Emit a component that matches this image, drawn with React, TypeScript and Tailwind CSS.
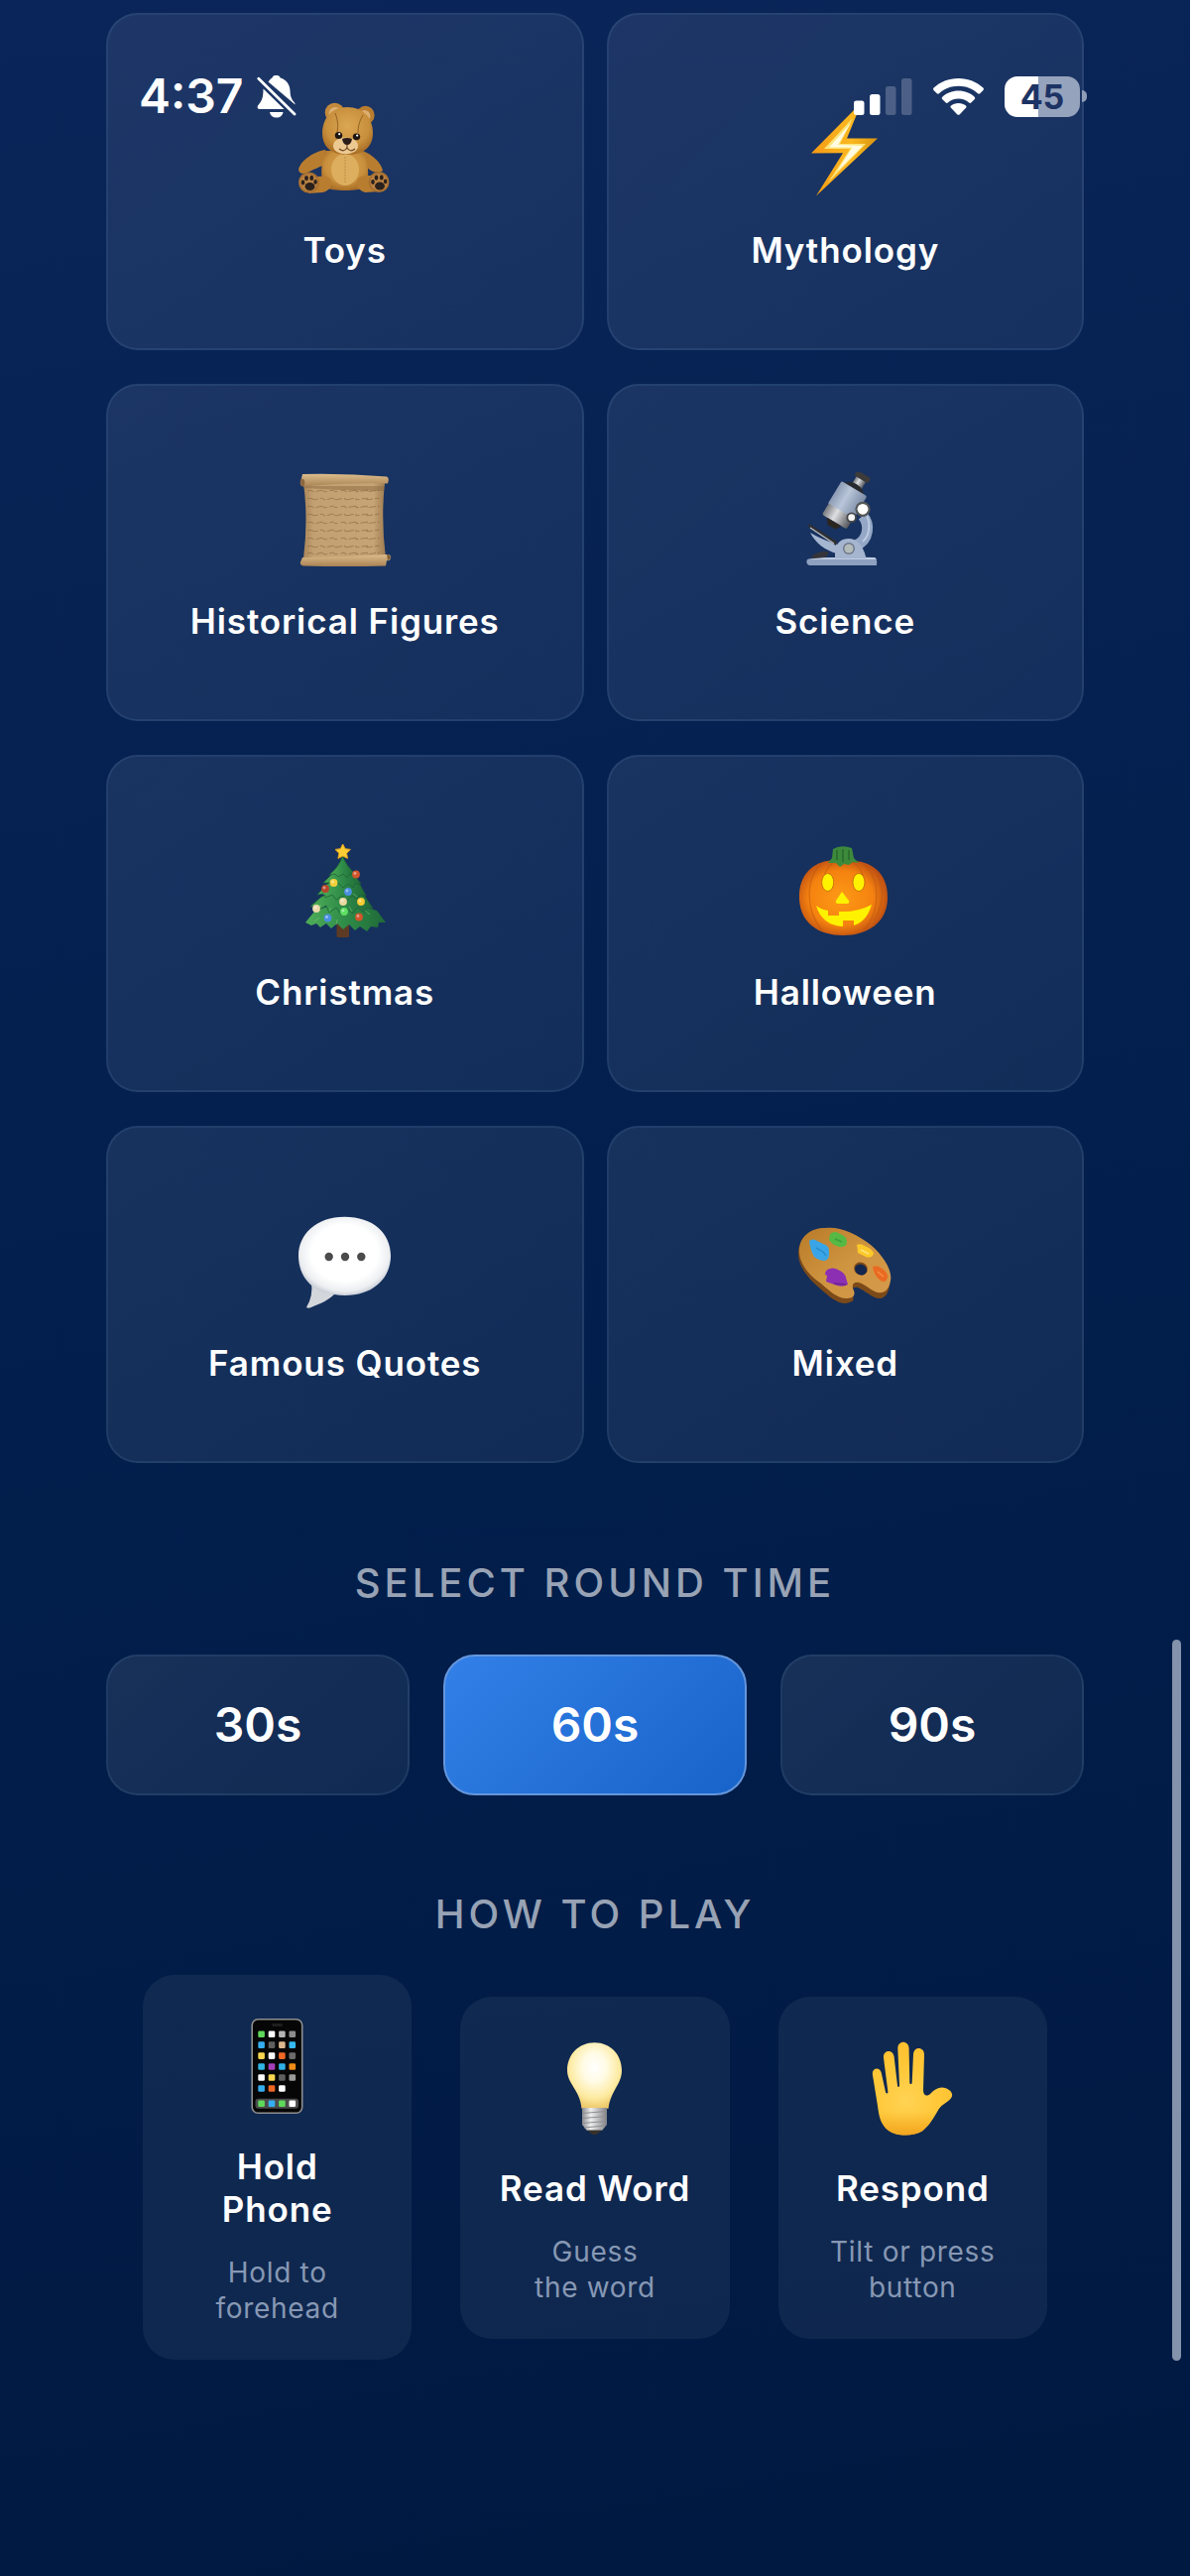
import React, { useState } from 'react';

interface IconProps {
  children: React.ReactNode;
}

const Emoji: React.FC<IconProps> = ({ children }) => (
  <svg viewBox="0 0 96 96" className="w-24 h-24 shrink-0" aria-hidden="true">
    {children}
  </svg>
);

const Paw = ({ x, y }: { x: number; y: number }) => (
  <g transform={`translate(${x} ${y})`}>
    <circle r="10.5" fill="#a8702f" />
    <circle r="8.6" fill="#b98243" />
    <ellipse cx="1" cy="4" rx="5" ry="4" fill="#2a201c" />
    <ellipse cx="-6" cy="0" rx="1.8" ry="2.4" fill="#2a201c" />
    <ellipse cx="-2.5" cy="-4.4" rx="1.9" ry="2.6" fill="#2a201c" />
    <ellipse cx="2.8" cy="-4.6" rx="1.9" ry="2.6" fill="#2a201c" />
    <ellipse cx="6.6" cy="-.6" rx="1.7" ry="2.3" fill="#2a201c" />
  </g>
);

const TeddyIcon = () => (
  <Emoji>
    <defs>
      <radialGradient id="bear" cx=".5" cy=".4" r=".6">
        <stop offset="0" stopColor="#dba752" />
        <stop offset=".7" stopColor="#c88f3c" />
        <stop offset="1" stopColor="#a96f27" />
      </radialGradient>
    </defs>
    <path d="M28 49C16 51 3 60 1 69c1 6 8 4 13 1 7-3 14-6 18-10z" fill="#b97d30" />
    <path d="M66 50c9 4 18 11 20 20-5 4-12 1-17-4z" fill="#b97d30" />
    <path d="M28 50c-4 12-6 27 0 37 6 4 34 4 40 0 5-10 4-25-2-37z" fill="url(#bear)" />
    <ellipse cx="48" cy="69" rx="14" ry="16" fill="#dcae5e" />
    <path d="M48 56v26" stroke="#bb8840" strokeWidth=".8" strokeDasharray="2 1" />
    <path d="M14 76c9 0 18-2 20 4s-3 11-9 12l-14 1z" fill="#b97d30" />
    <path d="M80 75c-9 0-18-1-20 5s3 11 9 12l13-1z" fill="#b97d30" />
    <circle cx="37.5" cy="11.5" r="9.8" fill="#c38a3b" />
    <circle cx="38" cy="12.5" r="6.5" fill="#dcb074" />
    <circle cx="68.5" cy="14" r="9.2" fill="#b97d30" />
    <circle cx="67.5" cy="15" r="6" fill="#dcae70" />
    <path d="M50 6c17 0 26 12 26 26s-9 22-26 22-25-9-25-22S33 6 50 6z" fill="url(#bear)" />
    <path d="M38 12c3 8 3 13 2 19M66 14c-4 7-5 12-5 18" stroke="#8b5a22" strokeWidth=".9" fill="none" />
    <ellipse cx="48.5" cy="45" rx="12.5" ry="8.5" fill="#ecc991" />
    <ellipse cx="41.5" cy="34.5" rx="3.7" ry="3.5" fill="#1d1512" />
    <ellipse cx="59.5" cy="35.8" rx="3.7" ry="3.4" fill="#1d1512" />
    <circle cx="42.2" cy="33.2" r="1.1" fill="#fff" />
    <circle cx="60.2" cy="34.6" r="1.1" fill="#fff" />
    <path d="M45 38q5-2 10 0-1 6-5 6t-5-6z" fill="#2b1c18" />
    <path d="M50 44v3m-8 1q5 4 8-1 3 5 8 1" stroke="#6b431e" strokeWidth="1.2" fill="none" />
    <Paw x={11.5} y={82} />
    <Paw x={82} y={81.5} />
  </Emoji>
);

const BoltIcon = () => (
  <Emoji>
    <defs>
      <linearGradient id="bolt" x1="0" x2="1">
        <stop offset="0" stopColor="#f59a14" />
        <stop offset=".6" stopColor="#fbb821" />
        <stop offset="1" stopColor="#d9940f" />
      </linearGradient>
    </defs>
    <path d="M65 1 14 52.5l32-.2L19 95.5l62-58H50z" fill="url(#bolt)" />
    <path d="M56 17 27 48h26.500L31 82l38-39H43z" fill="#fde57a" />
    <path d="M54 22 32 46.500h23.500L40 71l26-26-25-1z" fill="#fffbe2" />
  </Emoji>
);

const ScrollIcon = () => (
  <Emoji>
    <defs>
      <linearGradient id="paper" x1="0" x2="1">
        <stop offset="0" stopColor="#a98558" />
        <stop offset=".12" stopColor="#c3a071" />
        <stop offset=".85" stopColor="#c6a475" />
        <stop offset="1" stopColor="#9e7b50" />
      </linearGradient>
      <linearGradient id="roll" x1="0" x2="0" y1="0" y2="1">
        <stop offset="0" stopColor="#ddbd8b" />
        <stop offset="1" stopColor="#a98354" />
      </linearGradient>
    </defs>
    <path d="M6 11h82q-4 36 1 76H6q5-40 0-76z" fill="url(#paper)" />
    <path d="M7 14h80v5q-40 0-79-3z" fill="#8c6a42" opacity=".5" />
    <g stroke="#86663f" strokeWidth="1" fill="none" opacity=".6">
      {[19, 27, 35, 43, 51, 59, 67, 75, 82].map((y, i) => (
        <path
          key={y}
          d={`M10 ${y}q3-1.500 5 0t6 0 5 0 6 0 5 0 6 0 5 0 6 0 5 0 6 0 5 0 6 0 5 0`}
          strokeDasharray={i % 2 ? '11 2 6 2 15 2' : '7 2 12 2 9 3'}
        />
      ))}
    </g>
    <path d="M5 2q42-1 85 2.500 3 1.500 1 7-44-1-84 3-5 0-4-5 1-3 2-7.500z" fill="url(#roll)" />
    <ellipse cx="5" cy="10.500" rx="2.300" ry="3.800" fill="#8b6840" />
    <path d="M5 86q42 0 85-3 5 0 4 4-1 3-4 2l-1 5.500q-42 1-83 0-4-1-3-4z" fill="url(#roll)" />
    <path d="M90 83q4 0 4 4l-3 2z" fill="#7f5e38" />
  </Emoji>
);

const MicroscopeIcon = () => (
  <Emoji>
    <defs>
      <linearGradient id="metal" x1="0" x2="1">
        <stop offset="0" stopColor="#8b9ab3" />
        <stop offset=".4" stopColor="#b9c6d9" />
        <stop offset="1" stopColor="#7c8ba6" />
      </linearGradient>
      <linearGradient id="silver" x1="0" x2="1">
        <stop offset="0" stopColor="#77787c" />
        <stop offset=".4" stopColor="#dedfe2" />
        <stop offset="1" stopColor="#55565b" />
      </linearGradient>
    </defs>
    <path d="M66 44c7 8 7 24-7 30" stroke="#95a7c6" strokeWidth="11" fill="none" />
    <path d="M70 44c4 8 3 20-4 26" stroke="#bccbe2" strokeWidth="2" fill="none" />
    <path d="M13 61c5 10 15 18 27 21l1-9C31 70 21 66 13 61z" fill="#a5b6d1" />
    <path d="m12 52 28 18-1 4-28-19z" fill="#2e2f33" />
    <path d="m13 56 24 16" stroke="#b5b9bf" strokeWidth="1.500" />
    <ellipse cx="23" cy="84" rx="9" ry="3.500" transform="rotate(-18 23 84)" fill="#34353a" />
    <path d="M10 88q17-3 68-2 3 2 2 8H12q-4-2-2-6z" fill="#8ea0c0" />
    <path d="M10 88q17-3 68-2l2 2H10z" fill="#c0cde2" />
    <path d="M38 87V80q2-13 14-13t17 18v2z" fill="#a5b5d0" />
    <circle cx="52" cy="77" r="6" fill="#6c7688" />
    <circle cx="52" cy="77" r="4.600" fill="#b3bcb9" />
    <g transform="rotate(31 50 32)">
      <rect x="44" y="1" width="11" height="12" fill="url(#silver)" />
      <rect x="41.500" y="-2.500" width="16" height="6" rx="2" fill="#3d3b3a" />
      <path d="M35 18q4-8 13-8t14 8z" fill="#292a2f" />
      <rect x="33.500" y="15" width="30" height="27" rx="2" fill="url(#metal)" />
      <rect x="34" y="41" width="29" height="13" rx="2" fill="url(#silver)" />
      <path d="M40 54h17l-4 6h-9z" fill="#2b2520" />
    </g>
    <circle cx="66" cy="37.300" r="7.600" fill="#555759" />
    <circle cx="66" cy="37.300" r="5.400" fill="#fff" />
    <circle cx="54.700" cy="45.700" r="5.300" fill="#444649" />
    <circle cx="54.700" cy="45.700" r="3.400" fill="#f4f4f4" />
  </Emoji>
);

const baubles = [
  [59, 31.5, '#d2552b'],
  [36.5, 40, '#f4cf3a'],
  [28, 46, '#b6452a'],
  [51, 49, '#4b8fe0'],
  [46, 59, '#e9d8a0'],
  [64, 59, '#f5cb35'],
  [19, 66, '#eadba8'],
  [47, 69, '#5ede62'],
  [30.5, 75.5, '#4b8fe0'],
  [62, 74.5, '#d2552b'],
] as const;

const TreeIcon = () => (
  <Emoji>
    <defs>
      <linearGradient id="needles" x1="0" x2="1">
        <stop offset="0" stopColor="#4fae59" />
        <stop offset=".5" stopColor="#2f8c48" />
        <stop offset="1" stopColor="#1f6938" />
      </linearGradient>
    </defs>
    <rect x="39.500" y="80" width="12.500" height="15" rx="1.500" fill="#5d3a24" />
    <path
      d="M45 58 17 69 8 80l6 3 5-2 4 4 6-4 5 5 6-5 6 6 6-5 6 6 5-4 7 5 4-5 7 1 1-5 7 0-9-12z"
      fill="url(#needles)"
    />
    <path d="M45 42 23 55l-10 9 7-1 2 4 7-4 3 7 7-5 5 7 6-6 6 5 4-6 8 5 2-5 6 1-8-12z" fill="url(#needles)" stroke="#1e6336" strokeWidth=".8" />
    <path d="M45 31 29 42l-9 10 7-1 1 4 7-3 4 5 6-4 5 5 5-5 6 4 2-5 6 1-6-11z" fill="url(#needles)" stroke="#1e6336" strokeWidth=".8" />
    <path d="M45 22 35 31l-9 9 7 0 2 3 6-3 5 5 5-4 5 4 2-4 6 0-7-9z" fill="url(#needles)" stroke="#1e6336" strokeWidth=".8" />
    <path d="M45.500 13Q42 24 32 32l6-1 3 3 5-3 4 4 3-4 6 1Q49 23 45.500 13z" fill="url(#needles)" stroke="#1e6336" strokeWidth=".8" />
    <g stroke="#6fc873" strokeWidth="1" opacity=".6">
      <path d="m24 62-5 4M34 65l-2 4M52 64l3 5M30 49l-4 3M56 51l4 3M22 75l-5 4M40 77l-1 5M68 68l5 4" />
    </g>
    {baubles.map(([x, y, fill]) => (
      <g key={`${x}-${y}`}>
        <circle cx={x} cy={y} r="3.900" fill={fill} />
        <circle cx={x - 1} cy={y - 1} r="1.400" fill="#fff" opacity=".45" />
      </g>
    ))}
    <path
      d="m45.700 1 2.400 4.700 5.300.7-3.900 3.800 1 5.200-4.800-2.400-4.800 2.400 1-5.200L38 6.400l5.300-.7z"
      fill="#ffce35"
      stroke="#e5a51d"
      strokeWidth="1"
      strokeLinejoin="round"
    />
  </Emoji>
);

const PumpkinIcon = () => (
  <Emoji>
    <defs>
      <radialGradient id="pumpkin" cx=".47" cy=".5" r=".56">
        <stop offset="0" stopColor="#fd9a16" />
        <stop offset=".65" stopColor="#f5820f" />
        <stop offset="1" stopColor="#b84a14" />
      </radialGradient>
    </defs>
    <path d="M46 20C58 14 92 20 91 55c0 25-20 38-45 38S1 80 2 52C3 20 34 13 46 20z" fill="url(#pumpkin)" />
    <path d="M24 21C8 36 8 68 25 88M37 19c-8 6-11 15-12 22M67 21c17 15 17 48 0 67M56 19c8 5 11 14 12 22M81 32c7 16 5 32-4 46" stroke="#b9530f" strokeWidth="1.200" fill="none" opacity=".5" />
    <path d="M36 6q8-5 19-1l2 10 5 5-6-1-4 3-5-1-4 3-4-4-8 0 4-5z" fill="#3d8a3c" />
    <path d="M40 7v10M46 6v13M52 7v10" stroke="#256428" strokeWidth="1.300" />
    <ellipse cx="30.700" cy="39.500" rx="6" ry="9" fill="#fff200" stroke="#c0630e" strokeWidth=".8" />
    <ellipse cx="62" cy="39.500" rx="6" ry="9" fill="#fff200" stroke="#c0630e" strokeWidth=".8" />
    <path d="m45 49-6 9q-1 3 2 3h9q3 0 2-3z" fill="#fff200" />
    <path
      d="M19 63q5 4 12 5v5h11v-4q18 1 33-7-5 17-18 21v-5H46v6q-21-1-27-21z"
      fill="#fff200"
    />
  </Emoji>
);

const BubbleIcon = () => (
  <Emoji>
    <defs>
      <radialGradient id="bubble" cx=".5" cy=".46" r=".55">
        <stop offset=".65" stopColor="#fff" />
        <stop offset=".88" stopColor="#eceef1" />
        <stop offset="1" stopColor="#c6cbd4" />
      </radialGradient>
    </defs>
    <path d="M14 68q2 15-5 26 2 2 7-1 14-5 21-12z" fill="#d3d6db" />
    <path d="M47.500 2.700C76 2.700 94 19 94 42S76 82 48 82q-6 0-11-1C16 79 1 64 1 42S19 2.700 47.500 2.700z" fill="url(#bubble)" />
    <circle cx="31.700" cy="43" r="4.200" fill="#4b4b4d" />
    <circle cx="48" cy="43" r="4.200" fill="#4b4b4d" />
    <circle cx="64.300" cy="43" r="4.200" fill="#4b4b4d" />
  </Emoji>
);

const PaletteIcon = () => (
  <Emoji>
    <defs>
      <linearGradient id="wood" x1="0" x2="1" y1="0" y2="1">
        <stop offset="0" stopColor="#b87a28" />
        <stop offset=".5" stopColor="#cf9440" />
        <stop offset="1" stopColor="#d59b4d" />
      </linearGradient>
    </defs>
    <path
      transform="translate(-1 3)"
      d="M28 14c14-2 31 5 46 17 14 12 22 27 20 38-2 12-8 15-15 12-6-3-12-8-17-10-5-1-7 2-6 6 2 5 4 8-6 10-10 0-18-8-26-15C12 62 2 50 2 37 2 22 14 14 28 14z"
      fill="#7c4a19"
    />
    <path
      d="M28 14c14-2 31 5 46 17 14 12 22 27 20 36-2 12-9 14-16 11-6-3-11-8-16-9-5-1-7 2-6 6 3 5 2 10-6 10-10 0-18-8-26-15C12 62 2 50 2 37 2 22 14 14 28 14z"
      fill="url(#wood)"
    />
    <ellipse cx="64" cy="55" rx="7" ry="6.300" transform="rotate(25 64 55)" fill="#7c4a19" />
    <ellipse cx="64.500" cy="55.800" rx="6.200" ry="5.300" transform="rotate(25 64 55)" fill="#13264e" />
    <path d="M12 27q4-3 8 0l6 3q6 1 6 8 1 7-4 9-6 0-11-4-4-7-5-16z" fill="#3aa5e6" />
    <path d="m19 34 7 4 3 4" stroke="#2a8dcc" strokeWidth="1.500" fill="none" />
    <path d="M33 20q5-4 10 0 7 2 7 8 0 6-8 5-7-2-10-7z" fill="#55b944" />
    <path d="m38 25 7 3" stroke="#3f9f3a" strokeWidth="1.500" />
    <path d="M60 31q4-2 8 1 8 3 9 8-2 5-8 3l-8-4q0-4-1-8z" fill="#fcc92a" />
    <path d="m64 36 8 4" stroke="#ffe27a" strokeWidth="1.500" />
    <path d="M76 53q4-2 8 1 8 5 7 10-2 6-7 3-7-5-8-14z" fill="#ea6a22" />
    <path d="m81 58 6 5" stroke="#f98f45" strokeWidth="1.500" />
    <path d="M30 56q6-3 11 0 7 3 8 8l2 7q-5 3-11 1l-11-4 1-6q-4-1 0-6z" fill="#8d2fb3" />
    <path d="m37 70 12 1" stroke="#6a2290" strokeWidth="1.500" />
  </Emoji>
);

const apps = [
  ['#5fd95a', '#fff', '#b5b5b5', '#8c8c8c'],
  ['#35aef0', '#5f5f5f', '#dcb78e', '#35b9f0'],
  ['#fcd650', '#fff', '#ef6724', '#6b6b6b'],
  ['#2fb6e4', '#a53fbb', '#2fb0e4', '#f08b17'],
  ['#fff', '#fcd650', '#5f5f5f', '#9a9a9a'],
  ['#35aef0', '#ef6724', '#fff'],
];

const PhoneIcon = () => (
  <Emoji>
    <rect x="22.200" y=".8" width="50.500" height="94.400" rx="6" fill="#060606" stroke="#8f8f8f" strokeWidth="1.600" />
    <rect x="42" y="5" width="11" height="3" rx="1.500" fill="#1e1e1e" />
    {apps.map((row, r) =>
      row.map((fill, c) => (
        <rect key={`${r}-${c}`} x={28.3 + c * 10.4} y={12.4 + r * 10.95} width="6.600" height="6.600" rx="1.300" fill={fill} />
      )),
    )}
    <rect x="25.500" y="80.700" width="43.500" height="10" rx="3" fill="#4b4b4b" />
    {['#5fd95a', '#35aef0', '#5fd95a', '#fff'].map((fill, c) => (
      <rect key={c} x={28.3 + c * 10.4} y="82.400" width="6.600" height="6.600" rx="1.300" fill={fill} />
    ))}
  </Emoji>
);

const BulbIcon = () => (
  <Emoji>
    <defs>
      <radialGradient id="glow" cx=".5" cy=".38" r=".62">
        <stop offset="0" stopColor="#fff" />
        <stop offset=".35" stopColor="#fffbe5" />
        <stop offset=".75" stopColor="#fdeaa0" />
        <stop offset="1" stopColor="#edc96a" />
      </radialGradient>
      <linearGradient id="screw" x1="0" x2="1">
        <stop offset="0" stopColor="#8b8c90" />
        <stop offset=".35" stopColor="#efefef" />
        <stop offset="1" stopColor="#808186" />
      </linearGradient>
    </defs>
    <path d="M47.500 2.200c16 0 27.500 12 27.500 28 0 14-11 20-13.500 38.500h-27C33 50 20 44 20 30.200c0-16 11.500-28 27.500-28z" fill="url(#glow)" />
    <path d="M35 68h25v17l-5 6H40l-5-6z" fill="url(#screw)" />
    <path d="M35 73.500l25-2M35 78.500l25-2M35 83.500l25-2M37 88l21-2" stroke="#8e8f93" strokeWidth="1.200" />
    <path d="M40 90.500h15l-5 4q-2.500 1.500-5 0z" fill="#38322c" />
  </Emoji>
);

const HandIcon = () => (
  <Emoji>
    <defs>
      <radialGradient id="hand" gradientUnits="userSpaceOnUse" cx="42" cy="60" r="62">
        <stop offset="0" stopColor="#ffd353" />
        <stop offset=".5" stopColor="#ffc83a" />
        <stop offset="1" stopColor="#ffbf2c" />
      </radialGradient>
      <linearGradient id="wrist" x1="0" x2="0" y1="0" y2="1">
        <stop offset=".75" stopColor="#ef9d1a" stopOpacity="0" />
        <stop offset="1" stopColor="#ef9d1a" stopOpacity=".8" />
      </linearGradient>
      <path
        id="palm"
        d="M7.800 34c-.4-6.500 7.400-7.500 8.900-1.500L21 52c.4 2 2.600 2 2.400-.3L19 17.500c-.8-8 9.500-9 10.600-1L33 45.500c.3 2 2 2 2-.2L33.300 8c0-8.500 11-8.500 11.300 0l.7 34.500c0 2 2.200 2 2.400 0L49 14c.6-8.500 11.200-7.800 11 .4L59 50c0 6 4 7 7.500 3.500C71 48.500 76 46 82 48.200c6 2.300 7.500 7 5 10C84 62.500 78 64 74.500 69.500 69 79 65 86 58 91.500c-9 5.500-26 5.500-34-.5-8-6-9.500-14-11-25z"
      />
    </defs>
    <use href="#palm" fill="url(#hand)" />
    <use href="#palm" fill="url(#wrist)" />
  </Emoji>
);

const categories = [
  { name: 'Toys', icon: <TeddyIcon /> },
  { name: 'Mythology', icon: <BoltIcon /> },
  { name: 'Historical Figures', icon: <ScrollIcon /> },
  { name: 'Science', icon: <MicroscopeIcon /> },
  { name: 'Christmas', icon: <TreeIcon /> },
  { name: 'Halloween', icon: <PumpkinIcon /> },
  { name: 'Famous Quotes', icon: <BubbleIcon /> },
  { name: 'Mixed', icon: <PaletteIcon /> },
];

const roundTimes = [30, 60, 90];

const steps = [
  { title: ['Hold', 'Phone'], text: ['Hold to', 'forehead'], icon: <PhoneIcon /> },
  { title: ['Read Word'], text: ['Guess', 'the word'], icon: <BulbIcon /> },
  { title: ['Respond'], text: ['Tilt or press', 'button'], icon: <HandIcon /> },
];

const StatusBar = () => (
  <div className="absolute inset-x-0 top-0 pt-[75px] pl-[140px] pr-[104px] flex items-center justify-between text-white pointer-events-none">
    <div className="flex items-center gap-[14px]">
      <span className="text-[48px] leading-[44px] font-semibold">4:37</span>
      {/* Silent mode bell */}
      <svg viewBox="0 0 40 44" className="w-10 h-11" fill="currentColor" aria-hidden="true">
        <path d="M11.500 7.500C13 5 14.500 4.300 15.500 3.500 16 1.500 17.500 1 19.500 1s3.500.6 4.200 2.500C30 5.500 33 10 33.500 16c.3 6 1 8.500 4.500 12.500.5.500.6 1.300.6 2z" />
        <path d="M6.500 14.500 27.500 35H3c-2.200 0-3-1.500-2-3.500 4-4.500 5.500-8 5.500-17z" />
        <path d="M13 38h13.500c-.5 3.500-3 5.500-6.700 5.500S13.500 41.500 13 38z" />
        <path d="M1.800 4.200 38 40" stroke="currentColor" strokeWidth="2.800" strokeLinecap="round" />
      </svg>
    </div>
    <div className="flex items-center gap-[21px]">
      <svg viewBox="0 0 59 37" className="w-[59px] h-[37px]" fill="currentColor" aria-hidden="true">
        <rect x="0" y="22.500" width="10.500" height="14.500" rx="2.500" />
        <rect x="16" y="16" width="10.500" height="21" rx="2.500" />
        <rect x="32" y="8" width="10.500" height="29" rx="2.500" opacity=".22" />
        <rect x="48" y="0" width="10.500" height="37" rx="2.500" opacity=".22" />
      </svg>
      <svg viewBox="0 0 51 37" className="w-[51px] h-[37px]" fill="currentColor" aria-hidden="true">
        <path d="M25.500 0C35.500 0 44 3.600 50.400 9.600c.7.700.7 1.600.1 2.300l-3.300 3.400c-.6.6-1.500.6-2.200 0C39.800 10.500 33.200 7.800 25.500 7.800S11.200 10.500 6 15.300c-.7.6-1.600.6-2.200 0L.5 11.900c-.6-.7-.6-1.600.1-2.300C7 3.600 15.500 0 25.500 0z" />
        <path d="M25.500 12.600c6.500 0 12 2.300 16.200 6.100.7.700.7 1.600.1 2.300l-3.500 3.500c-.6.600-1.500.6-2.200 0-2.800-2.500-6.400-4-10.600-4s-7.800 1.500-10.600 4c-.7.6-1.600.6-2.200 0L9.200 21c-.6-.7-.6-1.600.1-2.300 4.200-3.800 9.700-6.100 16.200-6.100z" />
        <path d="M25.500 25c3 0 5.500 1 7.500 2.600.7.600.7 1.500 0 2.200l-6.400 6.600c-.6.600-1.600.6-2.200 0L18 29.800c-.7-.7-.7-1.600 0-2.200C20 26 22.500 25 25.500 25z" />
      </svg>
      <div className="flex items-center gap-[2px]">
        <div className="w-[76px] h-[41px] rounded-[13px] bg-linear-to-r from-white from-45% to-[#96a3bc] to-45% flex items-center justify-center">
          <span className="text-[34px] leading-[41px] font-bold text-[#1c3364]">45</span>
        </div>
        <div className="w-[5px] h-3 rounded-r-full bg-[#8e9cb6]" />
      </div>
    </div>
  </div>
);

export default function App() {
  const [category, setCategory] = useState<string | null>(null);
  const [roundTime, setRoundTime] = useState(60);

  return (
    <div className="relative min-h-screen bg-linear-170 from-[#0a2559] via-[#021e4b] via-55% to-[#001941] font-['Inter','Liberation_Sans',sans-serif] text-white">
      <main className="px-[107px] pt-[13px] pb-[218px]">
        <section className="grid grid-cols-2 gap-x-[23px] gap-y-[34px]">
          {categories.map(({ name, icon }) => (
            <button
              key={name}
              onClick={() => setCategory(name)}
              aria-pressed={category === name}
              className="flex flex-col items-center gap-8 pt-[87px] pb-[77px] rounded-[32px] border-2 border-[#7fb0d8]/12 bg-linear-135 from-[#e6f0ff]/9 to-[#e6f0ff]/7"
            >
              {icon}
              <span className="text-[35px] leading-[44px] font-semibold tracking-wide">{name}</span>
            </button>
          ))}
        </section>

        <h2 className="mt-[93px] mb-11 text-center text-[40px] leading-[56px] font-medium tracking-widest text-white/60">
          SELECT ROUND TIME
        </h2>
        <section className="grid grid-cols-3 gap-[34px]">
          {roundTimes.map((seconds) => (
            <button
              key={seconds}
              onClick={() => setRoundTime(seconds)}
              aria-pressed={roundTime === seconds}
              className={`py-[41px] rounded-[32px] border-2 text-[48px] leading-[56px] font-semibold bg-linear-135 ${
                roundTime === seconds
                  ? 'border-[#6596dc] from-[#3280e8] to-[#1763c9]'
                  : 'border-[#7fb0d8]/12 from-white/9 to-white/6'
              }`}
            >
              {seconds}s
            </button>
          ))}
        </section>

        <h2 className="mt-[92px] mb-[33px] text-center text-[40px] leading-[56px] font-medium tracking-widest text-white/60">
          HOW TO PLAY
        </h2>
        <section className="grid grid-cols-3 items-center gap-[49px] px-[37px]">
          {steps.map(({ title, text, icon }) => (
            <div
              key={title[0]}
              className="flex flex-col items-center pt-11 pb-[34px] rounded-[32px] bg-white/6 text-center whitespace-nowrap"
            >
              {icon}
              <h3 className="mt-8 text-[35px] leading-[43px] font-semibold tracking-wide">
                {title.map((line) => (
                  <span key={line} className="block">{line}</span>
                ))}
              </h3>
              <p className="mt-6 text-[28px] leading-[36px] tracking-wide text-[#8798b4]">
                {text.map((line) => (
                  <span key={line} className="block">{line}</span>
                ))}
              </p>
            </div>
          ))}
        </section>
      </main>

      <StatusBar />

      {/* Scroll indicator */}
      <div className="absolute right-[9px] top-[1653px] w-[9px] h-[727px] rounded-full bg-[#8492ab]" />
    </div>
  );
}
